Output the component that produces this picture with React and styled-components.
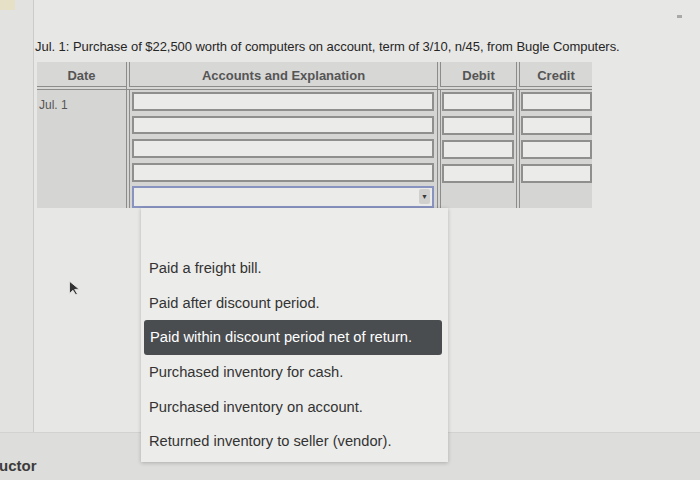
import React from "react";
import styled, { createGlobalStyle } from "styled-components";

const GlobalStyle = createGlobalStyle`
  html, body { margin: 0; padding: 0; }
  body {
    background: #e6e6e4;
    font-family: "Liberation Sans", Arial, sans-serif;
    overflow: hidden;
  }
`;

const Page = styled.div`
  position: relative;
  width: 700px;
  height: 480px;
  display: flex;
  flex-direction: column;
  background: #e7e7e5;
`;

const Main = styled.div`
  flex: 0 0 432px;
  display: flex;
`;

const SideStrip = styled.div`
  flex: 0 0 33px;
  background: #e2e2e0;
  border-right: 1px solid #cbcbc9;
`;

const Content = styled.div`
  flex: 1;
  padding: 39px 0 0 1px;
  display: flex;
  flex-direction: column;
  gap: 7px;
`;

const Title = styled.div`
  font-size: 13px;
  line-height: 16px;
  color: #262626;
  letter-spacing: -0.05px;
  white-space: nowrap;
`;

const Table = styled.div`
  position: relative;
  margin-left: 2px;
  width: 555px;
  display: grid;
  grid-template-columns: 89px 311px 79px 76px;
  grid-template-rows: 28px 118px;
  background: #d5d5d3;
`;

const HeadCell = styled.div`
  display: flex;
  align-items: center;
  justify-content: center;
  font-size: 13px;
  font-weight: bold;
  color: #555;
  background: #d7d7d5;
  border-bottom: 4px double #8c8c8a;
  box-sizing: border-box;
  padding-top: 3px;
  ${(p) => (p.$sep ? "border-left: 4px double #8c8c8a;" : "")}
`;

const BodyCol = styled.div`
  display: flex;
  flex-direction: column;
  gap: 5px;
  padding: 2px ${(p) => p.$pr ?? 2}px 0 ${(p) => p.$pl ?? 2}px;
  box-sizing: border-box;
  ${(p) => (p.$sep ? "border-left: 4px double #8c8c8a;" : "")}
`;

const DateText = styled.div`
  font-size: 12px;
  color: #555;
  padding: 6px 0 0 0;
`;

const Field = styled.div`
  height: 19px;
  box-sizing: border-box;
  border: 2px solid #8f8f8d;
  background: #ebebe9;
`;

const Select = styled.div`
  position: relative;
  height: 23px;
  margin-top: -1px;
  box-sizing: border-box;
  border: 2px solid #8893c0;
  background: #ebebe9;
  display: flex;
  justify-content: flex-end;
  align-items: center;
  padding-right: 2px;
`;

const Arrow = styled.div`
  width: 11px;
  height: 15px;
  background: #d0d0ce;
  border-radius: 2px;
  display: flex;
  align-items: center;
  justify-content: center;
  font-size: 7px;
  color: #3a3a3a;
`;

const Menu = styled.div`
  position: absolute;
  left: 104px;
  top: 146px;
  width: 307px;
  height: 254px;
  box-sizing: border-box;
  background: #ececea;
  box-shadow: 0 1px 4px rgba(0, 0, 0, 0.22);
  padding: 43px 6px 0 3px;
  display: flex;
  flex-direction: column;
  z-index: 2;
`;

const Item = styled.div`
  height: 34.6px;
  display: flex;
  align-items: center;
  padding-left: ${(p) => (p.$active ? 6 : 5)}px;
  font-size: 14.7px;
  border-radius: 3px;
  color: ${(p) => (p.$active ? "#ffffff" : "#333")};
  background: ${(p) => (p.$active ? "#4a4d50" : "transparent")};
  white-space: nowrap;
`;

const Footer = styled.div`
  flex: 1;
  background: #dddddb;
  border-top: 1px solid #d2d2d0;
  display: flex;
  align-items: flex-end;
  padding-bottom: 6px;
  box-sizing: border-box;
`;

const FooterText = styled.div`
  font-size: 15px;
  font-weight: bold;
  color: #3c3c3c;
  margin-left: -1px;
`;

const Cursor = styled.svg`
  position: absolute;
  left: 67px;
  top: 280px;
  z-index: 3;
`;

const CornerTint = styled.div`
  position: absolute;
  left: 0;
  top: 0;
  width: 15px;
  height: 10px;
  background: #e6e0c6;
`;

const Mark = styled.div`
  position: absolute;
  left: 677px;
  top: 15px;
  width: 5px;
  height: 3px;
  background: #a9a9a7;
`;

const options = [
  "Paid a freight bill.",
  "Paid after discount period.",
  "Paid within discount period net of return.",
  "Purchased inventory for cash.",
  "Purchased inventory on account.",
  "Returned inventory to seller (vendor).",
];

export default function App() {
  return (
    <>
      <GlobalStyle />
      <Page>
        <CornerTint />
        <Mark />
        <Main>
          <SideStrip />
          <Content>
            <Title>
              Jul. 1: Purchase of $22,500 worth of computers on account, term of 3/10, n/45, from Bugle Computers.
            </Title>
            <Table>
              <HeadCell>Date</HeadCell>
              <HeadCell $sep>Accounts and Explanation</HeadCell>
              <HeadCell $sep>Debit</HeadCell>
              <HeadCell $sep>Credit</HeadCell>

              <BodyCol>
                <DateText>Jul. 1</DateText>
              </BodyCol>
              <BodyCol $sep $pl={2} $pr={3}>
                <Field />
                <Field />
                <Field />
                <Field />
                <Select>
                  <Arrow>▼</Arrow>
                </Select>
              </BodyCol>
              <BodyCol $sep $pl={1} $pr={2}>
                <Field />
                <Field />
                <Field />
                <Field />
              </BodyCol>
              <BodyCol $sep $pl={1} $pr={0}>
                <Field />
                <Field />
                <Field />
                <Field />
              </BodyCol>

              <Menu>
                {options.map((o, i) => (
                  <Item key={o} $active={i === 2}>
                    {o}
                  </Item>
                ))}
              </Menu>
            </Table>
          </Content>
        </Main>
        <Footer>
          <FooterText>uctor</FooterText>
        </Footer>
        <Cursor width="14" height="16" viewBox="0 0 12 14">
          <path d="M2 1 L2 12 L5 9 L7.5 13 L9 12.2 L6.6 8.3 L10.5 8 Z" fill="#333" stroke="#e6e6e4" strokeWidth="0.8" />
        </Cursor>
      </Page>
    </>
  );
}
